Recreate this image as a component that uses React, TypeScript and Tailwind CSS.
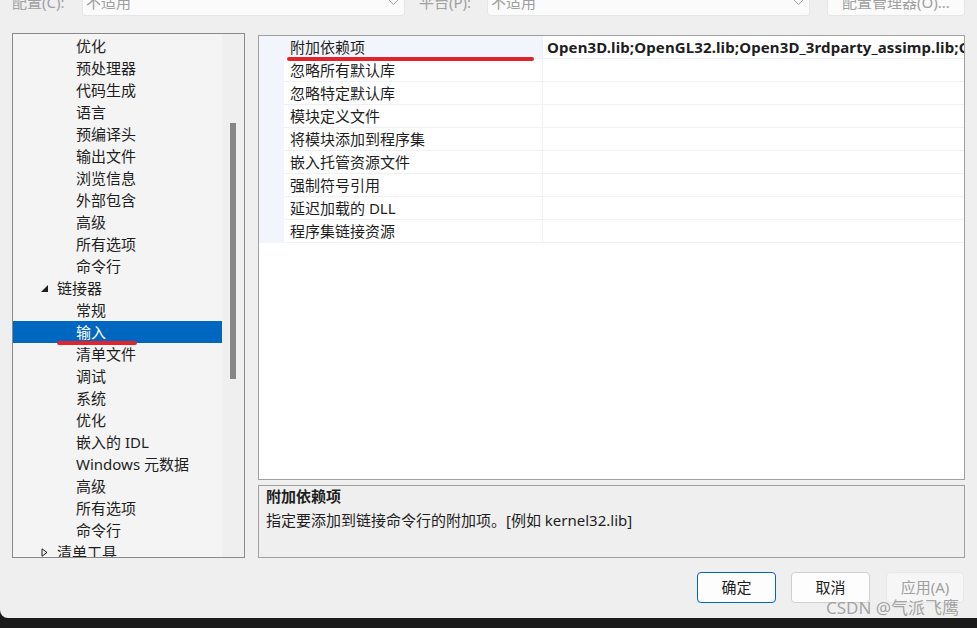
import React from "react";

const ui = { fontFamily: "'Segoe UI', 'Noto Sans', 'Noto Sans CJK SC', sans-serif" } as const;

type Node = { label: string; level: 1 | 2; open?: boolean; selected?: boolean };

const tree: Node[] = [
  { label: "优化", level: 2 },
  { label: "预处理器", level: 2 },
  { label: "代码生成", level: 2 },
  { label: "语言", level: 2 },
  { label: "预编译头", level: 2 },
  { label: "输出文件", level: 2 },
  { label: "浏览信息", level: 2 },
  { label: "外部包含", level: 2 },
  { label: "高级", level: 2 },
  { label: "所有选项", level: 2 },
  { label: "命令行", level: 2 },
  { label: "链接器", level: 1, open: true },
  { label: "常规", level: 2 },
  { label: "输入", level: 2, selected: true },
  { label: "清单文件", level: 2 },
  { label: "调试", level: 2 },
  { label: "系统", level: 2 },
  { label: "优化", level: 2 },
  { label: "嵌入的 IDL", level: 2 },
  { label: "Windows 元数据", level: 2 },
  { label: "高级", level: 2 },
  { label: "所有选项", level: 2 },
  { label: "命令行", level: 2 },
  { label: "清单工具", level: 1, open: false },
];

const props = [
  "附加依赖项",
  "忽略所有默认库",
  "忽略特定默认库",
  "模块定义文件",
  "将模块添加到程序集",
  "嵌入托管资源文件",
  "强制符号引用",
  "延迟加载的 DLL",
  "程序集链接资源",
];

const Chevron = () => (
  <svg width="11" height="7" viewBox="0 0 11 7" className="shrink-0">
    <polyline points="1,1 5.5,5.5 10,1" fill="none" stroke="#a8a8a8" strokeWidth="1" />
  </svg>
);

const Dropdown = ({ text }: { text: string }) => (
  <div className="flex h-full w-[323px] items-center justify-between rounded-b-[4px] border border-t-0 border-[#e6e6e6] bg-[#fbfbfb] pl-[3px] pr-[5px]">
    <span className="text-[#9d9d9d]">{text}</span>
    <Chevron />
  </div>
);

export default function App() {
  return (
    <div style={ui} className="h-[628px] w-[977px] overflow-hidden bg-[#1b1b1b] text-[15px] text-[#1e1e1e]">
      <div className="relative flex h-[618px] flex-col overflow-hidden rounded-bl-[8px] bg-[#efefef]">
        {/* top selectors, mostly scrolled off */}
        <div className="-mt-[11px] flex h-[27px] items-stretch pl-[12px] leading-none">
          <div className="flex w-[70px] items-center text-[#a0a0a0]">配置(C):</div>
          <Dropdown text="不适用" />
          <div className="ml-[14px] flex w-[68px] items-center text-[#a0a0a0]">平台(P):</div>
          <Dropdown text="不适用" />
          <div className="ml-[17px] flex w-[138px] items-center justify-center rounded-b-[4px] border border-t-0 border-[#e6e6e6] bg-[#fbfbfb] text-[#a0a0a0]">
            配置管理器(O)...
          </div>
        </div>

        <div className="mt-[17px] flex h-[525px] pl-[12px]">
          {/* category tree */}
          <div className="relative flex w-[233px] overflow-hidden border border-[#8a8a8a] bg-[#f4f4f4]">
            <div className="flex-1 overflow-hidden pt-[1px]">
              {tree.map((n, i) => (
                <div
                  key={i}
                  className={
                    "flex h-[22px] items-center leading-[22px] " +
                    (n.level === 1 ? "pl-[28px]" : "pl-[63px]") +
                    (n.selected ? " bg-[#0067c0] text-white" : "")
                  }
                >
                  {n.level === 1 && (
                    <span className="mr-[9px] flex w-[7px] items-center">
                      {n.open ? (
                        <svg width="7" height="7" viewBox="0 0 7 7">
                          <polygon points="7,0 7,7 0,7" fill="#1e1e1e" />
                        </svg>
                      ) : (
                        <svg width="7" height="9" viewBox="0 0 7 9">
                          <polygon points="1,0.8 6,4.5 1,8.2" fill="none" stroke="#1e1e1e" strokeWidth="1" />
                        </svg>
                      )}
                    </span>
                  )}
                  <span className="whitespace-nowrap">{n.label}</span>
                </div>
              ))}
            </div>
            <div className="w-[22px] shrink-0 bg-[#efefef] pt-[89px] pl-[8px]">
              <div className="h-[256px] w-[6px] bg-[#868686]" />
            </div>
            <div className="absolute left-[44px] top-[307px] h-[4px] w-[80px] rounded-full bg-[#e3232b]" />
          </div>

          <div className="ml-[13px] mt-[2px] flex w-[707px] flex-col">
            {/* property grid */}
            <div className="relative flex h-[446px] flex-col overflow-hidden border border-[#a0a0a0] bg-white">
              {props.map((p, i) => (
                <div key={i} className="flex h-[23px] leading-[22px]">
                  <div className="w-[25px] shrink-0 bg-[#f2f5fb]" />
                  <div
                    className={
                      "w-[258px] shrink-0 border-b border-[#eef1f6] pl-[6px] whitespace-nowrap " +
                      (i === 0 ? "bg-[#f2f5fb]" : "bg-white")
                    }
                  >
                    {p}
                  </div>
                  <div className="min-w-0 flex-1 overflow-hidden border-b border-l border-[#eef1f6] pl-[4px] whitespace-nowrap font-bold tracking-[0.12px]">
                    {i === 0 ? "Open3D.lib;OpenGL32.lib;Open3D_3rdparty_assimp.lib;Open3D_3rdparty_jpeg.lib;" : ""}
                  </div>
                </div>
              ))}
              <div className="absolute left-[28px] top-[21px] h-[4px] w-[247px] rounded-full bg-[#e3232b]" />
            </div>

            {/* description */}
            <div className="mt-[5px] h-[73px] border border-[#a0a0a0] bg-[#efefef] pl-[7px]">
              <div className="h-[21px] font-bold leading-[21px]">附加依赖项</div>
              <div className="mt-[2px] leading-[23px]">指定要添加到链接命令行的附加项。[例如 kernel32.lib]</div>
            </div>
          </div>
        </div>

        {/* buttons */}
        <div className="mt-[14px] flex justify-end gap-[15px] pr-[13px]">
          <button className="h-[31px] w-[79px] rounded-[4px] border border-[#0067c0] bg-[#fdfdfd]">确定</button>
          <button className="h-[31px] w-[79px] rounded-[4px] border border-[#d0d0d0] bg-[#fdfdfd]">取消</button>
          <button className="ml-[1px] h-[31px] w-[78px] rounded-[4px] border border-[#e8e8e8] bg-[#f6f6f6] text-[#a0a0a0]">
            应用(A)
          </button>
        </div>

        <div className="absolute left-[826px] top-[597px] text-[17px] leading-[22px] text-[#9a9a9a]/90">CSDN @气派飞鹰</div>
      </div>
    </div>
  );
}
